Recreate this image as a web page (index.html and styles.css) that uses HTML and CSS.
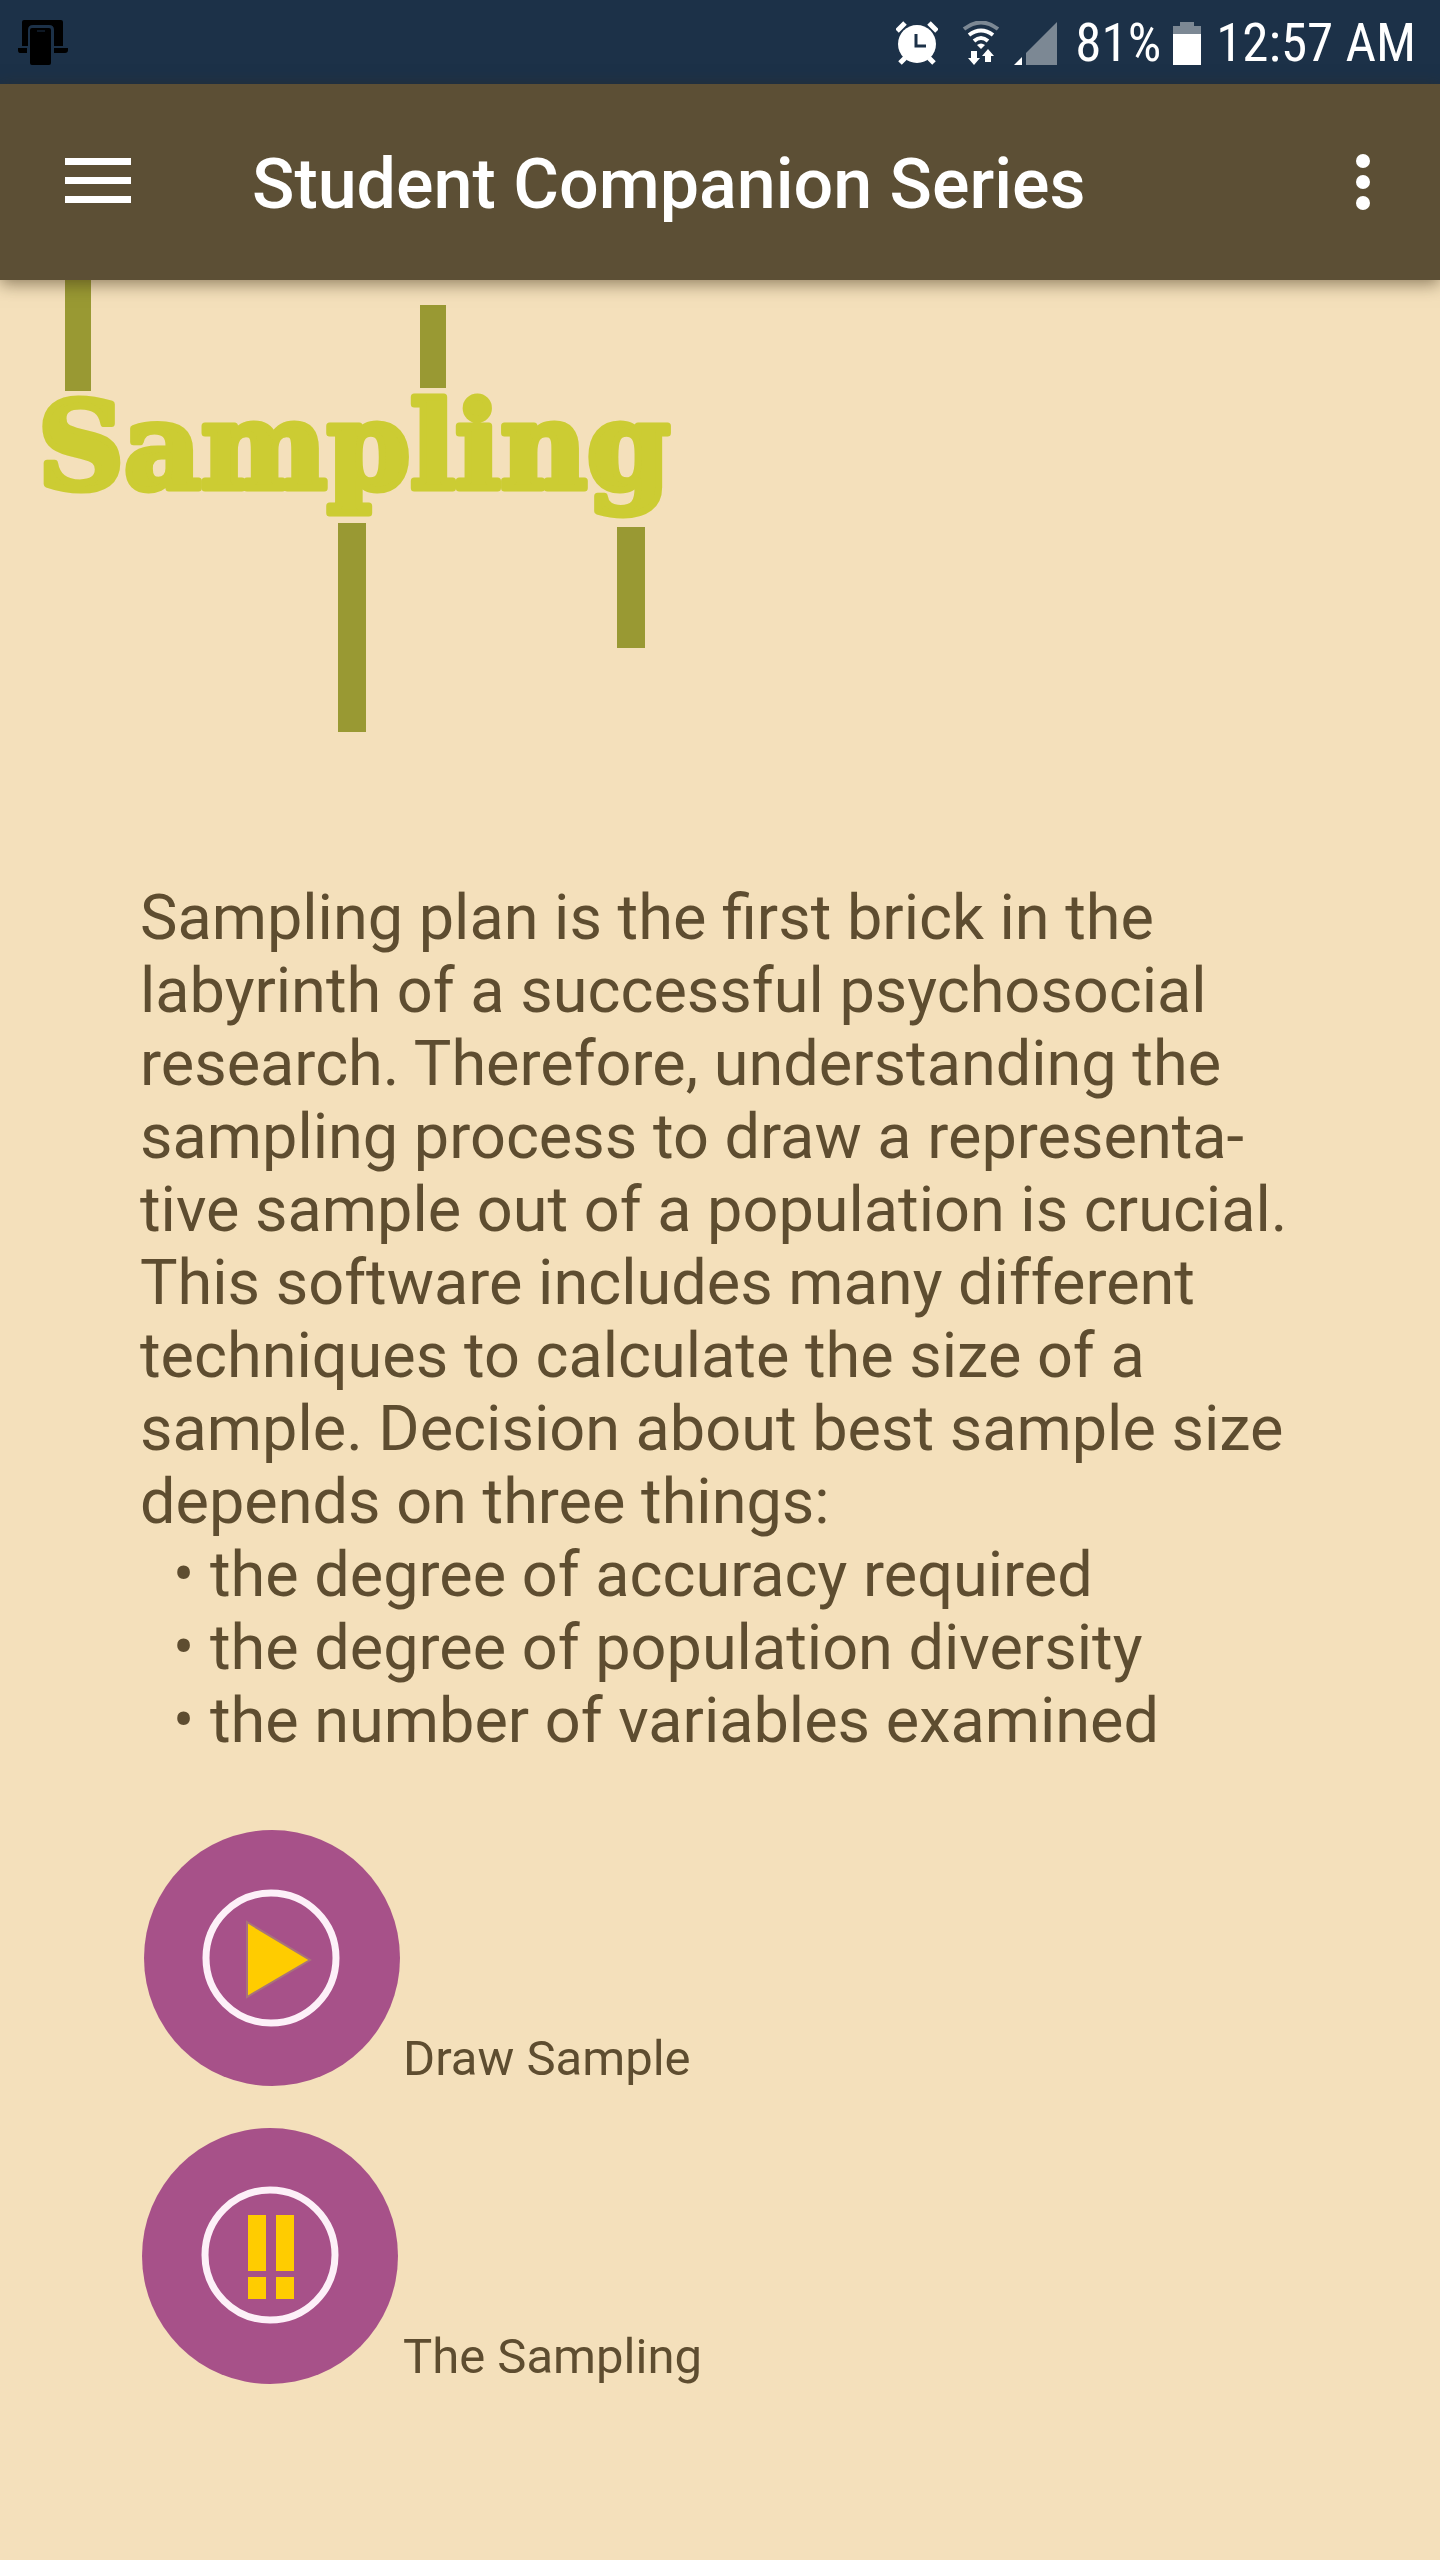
FILE: index.html
```html
<!DOCTYPE html>
<html lang="en">
<head>
<meta charset="utf-8">
<meta name="viewport" content="width=device-width, initial-scale=1">
<title>Student Companion Series</title>
<link rel="stylesheet" href="styles.css">
</head>
<body>
<div class="status">
  <svg class="status-cast" width="50" height="46" viewBox="0 0 50 46" aria-hidden="true">
    <path d="M4 26V2Q4 0 6 0H43Q45 0 45 2V26H36V10Q36 5 31 5H15Q10 5 10 10V26Z"/>
    <path d="M0 28H9V33H2Q0 33 0 30ZM36 28H50V30Q50 33 47 33H36Z"/>
    <rect x="12" y="8" width="21" height="37" rx="2"/>
    <path d="M19 11H27" stroke="#1c3148" stroke-width="1"/>
  </svg>
  <div class="status-right">
    <svg width="42" height="44" viewBox="0 0 42 44" aria-hidden="true">
      <circle cx="21" cy="23" r="19" fill="#fff"/>
      <path d="M1 10L9 2M33 2L41 10M9 37L4 42M33 37L38 42" stroke="#fff" stroke-width="5"/>
      <path d="M20 13V25H30" fill="none" stroke="#1c3148" stroke-width="3"/>
    </svg>
    <svg class="wifi" width="38" height="44" viewBox="0 0 38 44" aria-hidden="true">
      <g fill="none" stroke="#fff" stroke-width="4">
        <path d="M2 8Q19 -5 36 8" stroke="#7c8894"/>
        <path d="M7 14Q19 5 31 14"/>
        <path d="M12 20Q19 14 26 20"/>
      </g>
      <path d="M19 28L15 24Q19 21 23 24Z" fill="#fff"/>
      <path d="M9 30H15V37H18L12 44L6 37H9ZM23 41V35H20L26 28L32 35H29V41Z" fill="#fff"/>
    </svg>
    <svg class="signal" width="43" height="43" viewBox="0 0 43 43" aria-hidden="true">
      <path d="M12 43V31L43 0V43Z" fill="#7c8894"/>
      <path d="M0 43L8 35V43Z" fill="#fff"/>
    </svg>
    <span class="battery-level">81%</span>
    <svg class="battery" width="28" height="43" viewBox="0 0 28 43" aria-hidden="true">
      <path d="M7 0H21V4H28V12H0V4H7Z" fill="#7c8894"/>
      <path d="M0 12H28V43H0Z" fill="#fff"/>
    </svg>
    <time>12:57 AM</time>
  </div>
</div>
<header class="appbar">
  <button class="icon-button" type="button" aria-label="Open menu">
    <svg width="66" height="48" viewBox="0 0 66 48"><path d="M0 0H66V7H0ZM0 19H66V26H0ZM0 38H66V45H0Z"/></svg>
  </button>
  <h1>Student Companion Series</h1>
  <button class="icon-button" type="button" aria-label="More options">
    <svg width="14" height="56" viewBox="0 0 14 56"><circle cx="7" cy="7" r="7"/><circle cx="7" cy="28" r="7"/><circle cx="7" cy="49" r="7"/></svg>
  </button>
</header>
<main>
  <svg class="logo" width="630" height="452" viewBox="0 0 630 452">
    <path class="logo-bars" d="M25 0H51V111H25ZM380 25H406V108H380ZM298 243H326V452H298ZM577 247H605V368H577Z"/>
    <text class="logo-text" x="-2" y="208">Sampling</text>
  </svg>
  <section class="intro">
    <p>Sampling plan is the first brick in the<br>labyrinth of a successful psychosocial<br>research. Therefore, understanding the<br>sampling process to draw a representa-<br>tive sample out of a population is crucial.<br>This software includes many different<br>techniques to calculate the size of a<br>sample. Decision about best sample size<br>depends on three things:</p>
    <ul>
      <li>the degree of accuracy required</li>
      <li>the degree of population diversity</li>
      <li>the number of variables examined</li>
    </ul>
  </section>
  <nav class="actions">
    <a href="#draw">
      <svg width="258" height="258" viewBox="0 0 258 258" aria-hidden="true">
        <circle cx="130" cy="129" r="128" fill="#a75189"/>
        <circle cx="129" cy="129" r="65" fill="none" stroke="#fdf0f8" stroke-width="7"/>
        <path d="M105 93L168 131L105 168Z" fill="#ffcc00" stroke="#a9737a" stroke-width="2"/>
      </svg>
      <span>Draw Sample</span>
    </a>
    <a href="#sampling">
      <svg width="258" height="258" viewBox="0 0 258 258" aria-hidden="true">
        <circle cx="128" cy="129" r="128" fill="#a75189"/>
        <circle cx="128" cy="128" r="65" fill="none" stroke="#fdf0f8" stroke-width="7"/>
        <path d="M106 88H124V144H106ZM134 88H152V144H134ZM106 150H124V172H106ZM134 150H152V172H134Z" fill="#ffcc00"/>
      </svg>
      <span>The Sampling</span>
    </a>
  </nav>
</main>
</body>
</html>
```
FILE: styles.css
```css
* { box-sizing: border-box; }
body {
  margin: 0;
  min-height: 100vh;
  background: #f4e0bb;
  color: #5e4d30;
  font-family: Roboto, "Liberation Sans", sans-serif;
}
svg { display: block; flex: none; }
.status {
  display: flex;
  align-items: center;
  justify-content: space-between;
  height: 84px;
  padding: 2px 24px 0 18px;
  background: #1c3148;
  color: #fff;
  font-family: "Roboto Condensed", Roboto, sans-serif;
  font-size: 53px;
  line-height: 82px;
}
.status-right { display: flex; align-items: center; }
.wifi { margin-left: 24px; }
.signal { margin-left: 14px; }
.battery-level { margin-left: 18px; }
.battery { margin: 0 15px 0 12px; }
.appbar {
  position: relative;
  display: flex;
  align-items: center;
  height: 196px;
  padding: 0 70px 0 65px;
  background: #5c4f35;
  color: #fff;
  box-shadow: 0 4px 16px rgba(60, 45, 20, 0.55);
}
.appbar h1 {
  flex: 1;
  margin: 0 0 0 121px;
  padding-top: 4px;
  font-size: 70px;
  font-weight: 500;
  line-height: 84px;
}
.icon-button {
  padding: 0;
  border: 0;
  background: none;
  fill: #fff;
  cursor: pointer;
}
main { padding: 0 40px 170px; }
.logo { overflow: visible; }
.logo-bars { fill: #999933; }
.logo-text {
  fill: #cccc33;
  stroke: #cccc33;
  stroke-width: 7px;
  stroke-linejoin: round;
  font-family: "DejaVu Serif", serif;
  font-size: 119px;
  font-weight: 700;
}
.intro {
  margin: 149px 0 0 100px;
  font-size: 63px;
  line-height: 73px;
}
.intro p, .intro ul { margin: 0; }
.intro ul { padding: 0 0 0 33px; list-style: none; }
.intro li::before { content: "• "; }
.actions {
  display: grid;
  gap: 40px;
  margin: 72px 0 0 102px;
}
.actions a {
  display: flex;
  align-items: flex-end;
  gap: 3px;
  color: inherit;
  font-size: 49px;
  line-height: 56px;
  text-decoration: none;
}
```
